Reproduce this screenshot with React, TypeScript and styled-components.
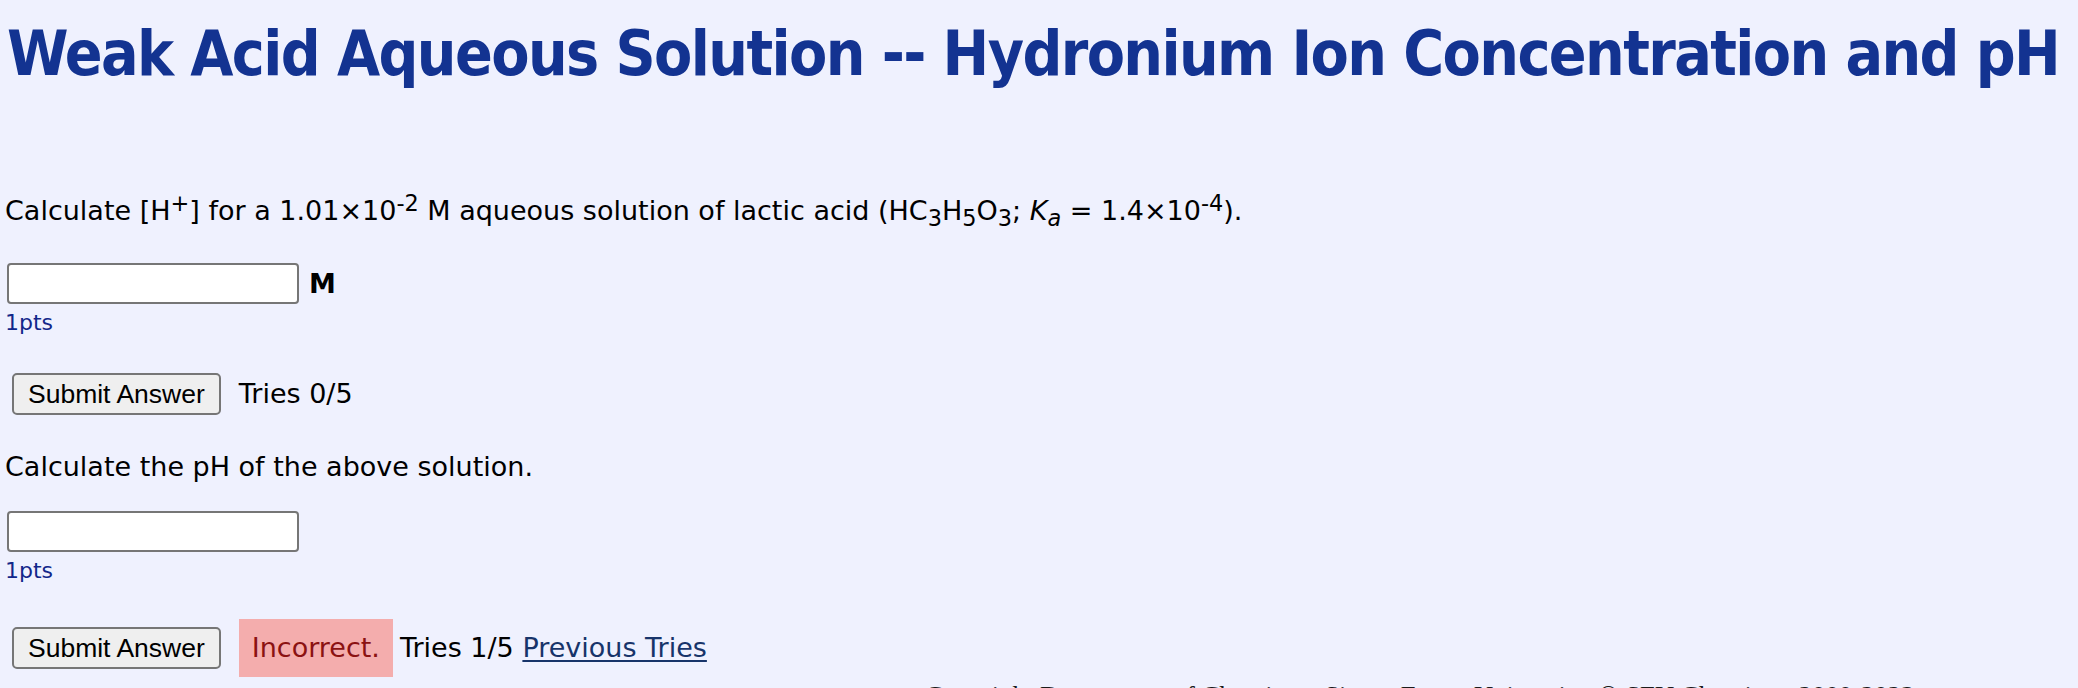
import React from "react";
import styled, { createGlobalStyle } from "styled-components";

const GlobalStyle = createGlobalStyle`
  html, body {
    margin: 0;
    padding: 0;
    background: #eff1fe;
  }
`;

const Page = styled.main`
  height: 688px;
  overflow: hidden;
  box-sizing: border-box;
  padding: 0 5px;
  background: #eff1fe;
  font-family: "DejaVu Sans", Verdana, sans-serif;
  font-size: 27px;
  color: #000;
`;

const Title = styled.h1`
  margin: 18px 0 0 2px;
  font-family: "DejaVu Sans Condensed", "DejaVu Sans", sans-serif;
  font-stretch: condensed;
  font-weight: 700;
  font-size: 62px;
  line-height: 72px;
  letter-spacing: -1.6px;
  color: #133391;
  white-space: nowrap;
`;

const Question = styled.p<{ $top: number }>`
  margin: ${(p) => p.$top}px 0 0;
  line-height: 32px;
  white-space: nowrap;

  sup,
  sub {
    font-size: 0.83em;
    line-height: 0;
  }
  sup {
    vertical-align: 0.42em;
  }
  sub {
    vertical-align: -0.25em;
  }
`;

const AnswerRow = styled.div<{ $top: number }>`
  display: flex;
  align-items: center;
  gap: 10px;
  margin-top: ${(p) => p.$top}px;
  margin-left: 2px;
`;

const AnswerInput = styled.input`
  box-sizing: border-box;
  width: 292px;
  height: 41px;
  margin: 0;
  border: 2px solid #767676;
  border-radius: 4px;
  background: #fff;
  font: 26px "Liberation Sans", Arial, sans-serif;
  padding: 0 6px;
`;

const Unit = styled.span`
  font-weight: 700;
  line-height: 32px;
`;

const Points = styled.div`
  margin-top: 6px;
  font-size: 22px;
  line-height: 26px;
  color: #12278a;
`;

const SubmitRow = styled.div<{ $top: number }>`
  display: flex;
  align-items: baseline;
  gap: 18px;
  margin: ${(p) => p.$top}px 0 0 7px;
`;

const SubmitButton = styled.button`
  box-sizing: border-box;
  height: 42px;
  margin: 0;
  padding: 4px 14px;
  border: 2px solid #767676;
  border-radius: 5px;
  background: #efefef;
  color: #000;
  font-family: "Liberation Sans", Arial, sans-serif;
  font-size: 26.5px;
  line-height: 30px;
`;

const Outcome = styled.span`
  display: flex;
  align-items: baseline;
  gap: 7px;
  line-height: 32px;
`;

const Verdict = styled.span`
  padding: 13px 13px 12.7px;
  background: #f4adad;
  color: #8b1212;
  line-height: 32px;
`;

const Tries = styled.span`
  line-height: 32px;
  white-space: nowrap;
`;

const HistoryLink = styled.a`
  color: #17346a;
  text-decoration: underline;
  text-underline-offset: 3px;
  text-decoration-thickness: 2px;
  cursor: pointer;
`;

const Footer = styled.footer`
  margin-top: 4px;
  padding-left: 920px;
  font-family: "Liberation Serif", "Times New Roman", serif;
  font-size: 26.7px;
  line-height: 30px;
  color: #1a1a1a;
  white-space: nowrap;
`;

export default function App() {
  return (
    <Page>
      <GlobalStyle />
      <Title>Weak Acid Aqueous Solution -- Hydronium Ion Concentration and pH</Title>

      <Question $top={105}>
        Calculate [H<sup>+</sup>] for a 1.01×10<sup>-2</sup> M aqueous solution of lactic acid
        (HC<sub>3</sub>H<sub>5</sub>O<sub>3</sub>; <i>K<sub>a</sub></i> = 1.4×10<sup>-4</sup>).
      </Question>
      <AnswerRow $top={36}>
        <AnswerInput type="text" aria-label="[H+] in M" />
        <Unit>M</Unit>
      </AnswerRow>
      <Points>1pts</Points>
      <SubmitRow $top={37}>
        <SubmitButton type="button">Submit Answer</SubmitButton>
        <Tries>Tries 0/5</Tries>
      </SubmitRow>

      <Question $top={36}>Calculate the pH of the above solution.</Question>
      <AnswerRow $top={28}>
        <AnswerInput type="text" aria-label="pH" />
      </AnswerRow>
      <Points>1pts</Points>
      <SubmitRow $top={35}>
        <SubmitButton type="button">Submit Answer</SubmitButton>
        <Outcome>
          <Verdict>Incorrect.</Verdict>
          <Tries>
            Tries 1/5 <HistoryLink>Previous Tries</HistoryLink>
          </Tries>
        </Outcome>
      </SubmitRow>

      <Footer>
        Copyright Department of Chemistry, Simon Fraser University, © SFU Chemistry 2000-2023
      </Footer>
    </Page>
  );
}
